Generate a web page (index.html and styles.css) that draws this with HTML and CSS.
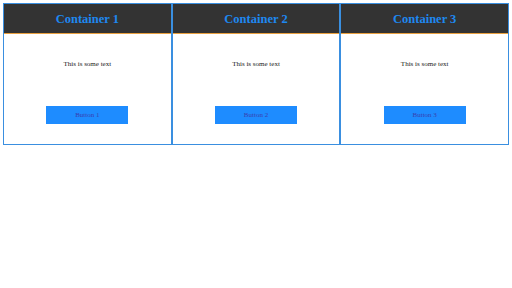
FILE: index.html
```html
<!DOCTYPE html>
<html>
  <head>
    <title>Containers</title>
    <meta charset="UTF-8">
    <link rel="stylesheet" href="styles.css">
  </head>
  <body>

    <!--Row of containers-->
    <div class="row">
      <div class="box">
        <div class="box-head"><h2>Container 1</h2></div>
        <div class="box-body">
          <p>This is some text</p>
          <button class="btn">Button 1</button>
        </div>
      </div>
      <div class="box">
        <div class="box-head"><h2>Container 2</h2></div>
        <div class="box-body">
          <p>This is some text</p>
          <button class="btn">Button 2</button>
        </div>
      </div>
      <div class="box">
        <div class="box-head"><h2>Container 3</h2></div>
        <div class="box-body">
          <p>This is some text</p>
          <button class="btn">Button 3</button>
        </div>
      </div>
    </div>

  </body>
</html>
```

FILE: styles.css
```css
html, body {
  margin: 0;
  padding: 0;
  background-color: #fff;
  font-family: "Liberation Serif", "Times New Roman", serif;
}

.row {
  display: flex;
  margin: 3px;
}

.box {
  flex: 1;
  height: 140px;
  border: 1px solid #3a8fe0;
  display: flex;
  flex-direction: column;
}

.box-head {
  height: 30px;
  background-color: #333;
  border-bottom: 1px solid #e8a040;
  display: flex;
  align-items: center;
  justify-content: center;
  padding-top: 2px;
  box-sizing: border-box;
}

.box-head h2 {
  margin: 0;
  font-size: 12.5px;
  font-weight: bold;
  color: #1e88f0;
}

.box-body {
  flex: 1;
  display: flex;
  flex-direction: column;
  align-items: center;
  padding-top: 26px;
}

.box-body p {
  margin: 0;
  font-size: 7px;
  line-height: 8px;
  color: #222;
}

.btn {
  margin-top: 38px;
  width: 82px;
  height: 18px;
  border: none;
  padding: 0;
  background-color: #1e8cff;
  color: #3a3fb0;
  font-family: "Liberation Serif", serif;
  font-size: 7px;
  cursor: pointer;
}
```
